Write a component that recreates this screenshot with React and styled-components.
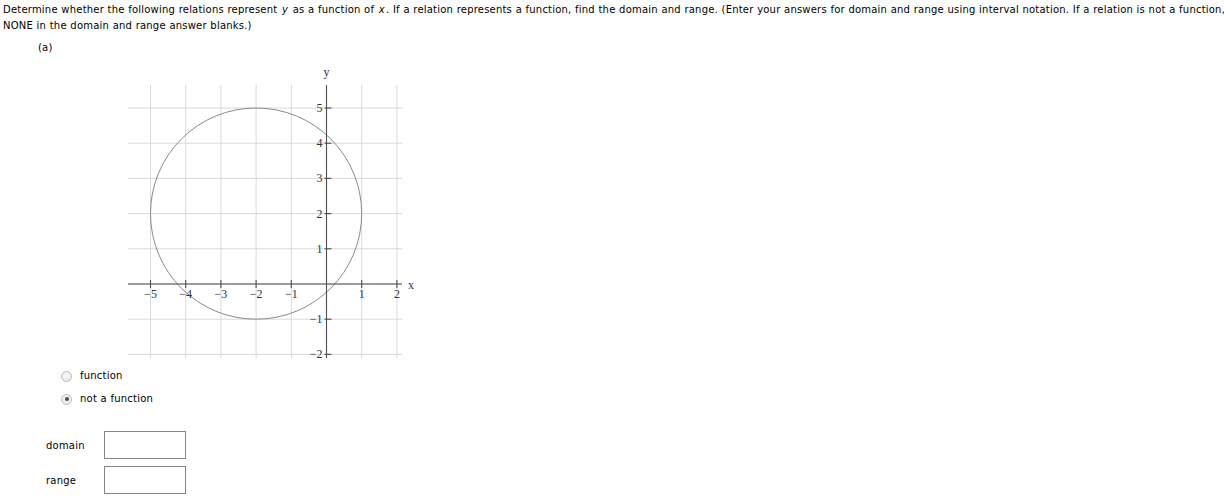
import React from 'react';
import styled, { createGlobalStyle } from 'styled-components';

const GlobalStyle = createGlobalStyle`
  html, body {
    margin: 0;
    padding: 0;
    background: #fff;
  }
  body {
    font-family: 'DejaVu Sans', Verdana, sans-serif;
    font-size: 10px;
    color: #000;
  }
`;

const Page = styled.div`
  padding: 2px 0 0 3px;
  width: 1221px;
  letter-spacing: 0.21px;
  word-spacing: 0.2px;
`;

const Prompt = styled.p`
  margin: 0;
  line-height: 16px;
  font-size: 10px;
  white-space: nowrap;
`;

const Var = styled.i`
  padding: 0 1px;
`;

const PartLabel = styled.div`
  margin: 6px 0 0 35px;
  line-height: 16px;
`;

const Graph = styled.svg`
  display: block;
  margin: 4px 0 0 117px;
  width: 300px;
  height: 300px;
  font-family: 'Liberation Serif', 'Times New Roman', serif;
  letter-spacing: 0;
  word-spacing: 0;
`;

const Choices = styled.div`
  display: flex;
  flex-direction: column;
  gap: 9px;
  margin: 9px 0 0 58px;
`;

const Choice = styled.label`
  display: flex;
  align-items: center;
  gap: 8px;
  height: 14px;
  line-height: 14px;
`;

const Radio = styled.span`
  width: 9px;
  height: 9px;
  border-radius: 50%;
  border: 1px solid #bcbcbc;
  background: radial-gradient(circle at 50% 40%, #fafafa 0%, #e4e4e4 100%);
  display: flex;
  align-items: center;
  justify-content: center;

  &::after {
    content: '';
    width: 4px;
    height: 4px;
    border-radius: 50%;
    background: ${p => (p.$checked ? '#4a4a4a' : 'transparent')};
  }
`;

const Answers = styled.div`
  display: flex;
  flex-direction: column;
  gap: 7px;
  margin: 25px 0 0 43px;
`;

const AnswerRow = styled.div`
  display: flex;
  align-items: center;
`;

const AnswerLabel = styled.span`
  width: 58px;
`;

const AnswerBox = styled.input`
  box-sizing: border-box;
  width: 82px;
  height: 28px;
  margin: 0;
  border: 1px solid #858585;
  background: #fff;
  outline: none;
`;

const U = 35.2;
const OX = 206.5;
const OY = 224;
const px = x => OX + x * U;
const py = y => OY - y * U;

const xs = [-5, -4, -3, -2, -1, 0, 1, 2];
const ys = [-2, -1, 0, 1, 2, 3, 4, 5];
const neg = n => (n < 0 ? '\u2212' + Math.abs(n) : String(n));

const CirclePlot = () => (
  <Graph viewBox="0 0 300 300">
    <g stroke="#d9d9d9" strokeWidth="1">
      {xs.map(x => (
        <line key={'v' + x} x1={px(x)} x2={px(x)} y1={25} y2={298} />
      ))}
      {ys.map(y => (
        <line key={'h' + y} x1={8} x2={282} y1={py(y)} y2={py(y)} />
      ))}
    </g>
    <circle cx={px(-2)} cy={py(2)} r={3 * U} fill="none" stroke="#8a8a8a" strokeWidth="1" />
    <g stroke="#4d4d4d" strokeWidth="1.1">
      <line x1={8} x2={282} y1={OY} y2={OY} />
      <line x1={OX} x2={OX} y1={25} y2={298} />
      {xs.filter(x => x !== 0).map(x => (
        <line key={'tx' + x} x1={px(x)} x2={px(x)} y1={OY - 4} y2={OY + 4} />
      ))}
      {ys.filter(y => y !== 0).map(y => (
        <line key={'ty' + y} x1={OX - 2} x2={OX + 5} y1={py(y)} y2={py(y)} />
      ))}
    </g>
    <g fontSize="12" fill="#333">
      {xs.filter(x => x !== 0).map(x => (
        <text key={'lx' + x} x={px(x)} y={OY + 14} textAnchor="middle">
          {neg(x)}
        </text>
      ))}
      {ys.filter(y => y !== 0).map(y => (
        <text key={'ly' + y} x={OX - 4} y={py(y) + 4} textAnchor="end">
          {neg(y)}
        </text>
      ))}
      <text x={288} y={OY + 5}>x</text>
      <text x={OX - 3} y={16}>y</text>
    </g>
  </Graph>
);

const App = () => {
  return (
    <Page>
      <GlobalStyle />
      <Prompt>
        Determine whether the following relations represent <Var>y</Var> as a function of <Var>x</Var>. If a relation represents a function, find the domain and range. (Enter your answers for domain and range using interval notation. If a relation is not a function,
        <br />
        NONE in the domain and range answer blanks.)
      </Prompt>
      <PartLabel>(a)</PartLabel>
      <CirclePlot />
      <Choices>
        <Choice>
          <Radio />
          function
        </Choice>
        <Choice>
          <Radio $checked />
          not a function
        </Choice>
      </Choices>
      <Answers>
        <AnswerRow>
          <AnswerLabel>domain</AnswerLabel>
          <AnswerBox type="text" />
        </AnswerRow>
        <AnswerRow>
          <AnswerLabel>range</AnswerLabel>
          <AnswerBox type="text" />
        </AnswerRow>
      </Answers>
    </Page>
  );
};

export default App;
